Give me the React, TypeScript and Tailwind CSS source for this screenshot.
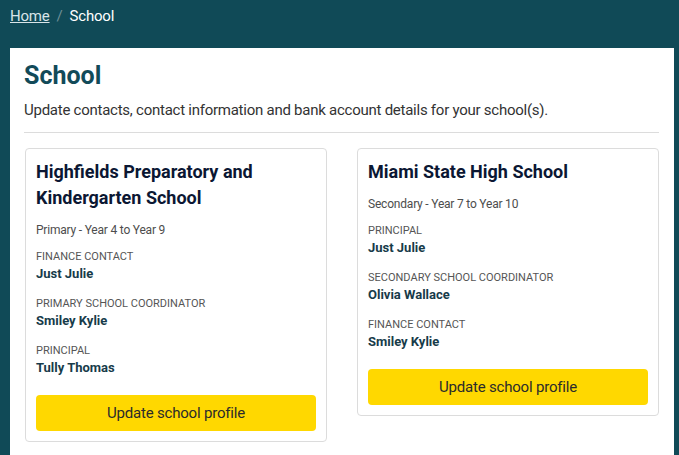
import React from 'react';

type Contact = { role: string; name: string };
type School = { name: string; level: string; contacts: Contact[] };

const schools: School[] = [
  {
    name: 'Highfields Preparatory and Kindergarten School',
    level: 'Primary - Year 4 to Year 9',
    contacts: [
      { role: 'Finance contact', name: 'Just Julie' },
      { role: 'Primary school coordinator', name: 'Smiley Kylie' },
      { role: 'Principal', name: 'Tully Thomas' },
    ],
  },
  {
    name: 'Miami State High School',
    level: 'Secondary - Year 7 to Year 10',
    contacts: [
      { role: 'Principal', name: 'Just Julie' },
      { role: 'Secondary school coordinator', name: 'Olivia Wallace' },
      { role: 'Finance contact', name: 'Smiley Kylie' },
    ],
  },
];

const SchoolCard: React.FC<{ school: School }> = ({ school }) => {
  return (
    <div className="flex flex-col rounded-[4px] border border-[#dcdcdc] bg-white px-[10px] py-[10px]">
      <h2 className="text-[18px] font-bold leading-[26px] text-[#0b1733]">{school.name}</h2>
      <div className="mt-[11px] text-[12px] leading-[16px] tracking-[-0.2px] text-[#4d4d4d]">
        {school.level}
      </div>
      <div className="mt-[11px] flex flex-col gap-[13px]">
        {school.contacts.map((c) => (
          <div key={c.role} className="flex flex-col">
            <span className="text-[11px] uppercase leading-[16px] text-[#555]">{c.role}</span>
            <span className="text-[13px] font-bold leading-[18px] text-[#173b4a]">{c.name}</span>
          </div>
        ))}
      </div>
      <button className="mt-[18px] h-[36px] w-full rounded-[4px] bg-[#ffd800] text-[15px] tracking-[-0.2px] text-[#2b2b2b]">
        Update school profile
      </button>
    </div>
  );
};

export default function App() {
  return (
    <div
      className="min-h-[455px] bg-[#104a57] pl-[10px] pr-[5px]"
      style={{ fontFamily: 'Roboto, "Liberation Sans", sans-serif' }}
    >
      <nav className="flex h-[48px] items-start pt-[6px] text-[15px] leading-[20px] tracking-[-0.2px]">
        <a href="#" className="text-[#d9e4e8] underline">Home</a>
        <span className="mx-[7px] text-[#6f8f98]">/</span>
        <span className="text-white">School</span>
      </nav>
      <div className="min-h-[407px] bg-white pl-[14px] pr-[15px] pt-[14px]">
        <h1 className="text-[25px] font-bold leading-[28px] text-[#124a59]">School</h1>
        <p className="mt-[10px] text-[15px] leading-[20px] tracking-[-0.25px] text-[#333]">
          Update contacts, contact information and bank account details for your school(s).
        </p>
        <div className="mt-[12px] border-t border-[#dcdcdc]" />
        <div className="mt-[15px] grid grid-cols-2 items-start gap-[30px] pl-[1px]">
          {schools.map((s) => (
            <SchoolCard key={s.name} school={s} />
          ))}
        </div>
      </div>
    </div>
  );
}
